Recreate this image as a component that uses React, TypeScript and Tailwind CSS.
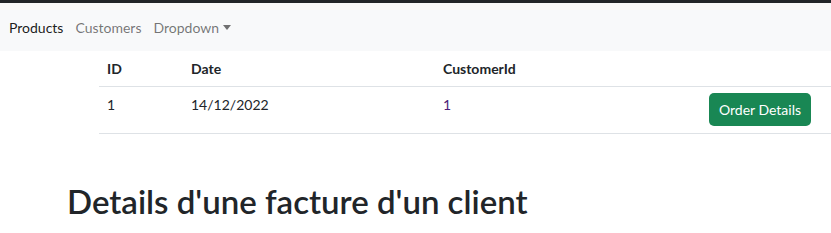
const font = { fontFamily: 'Lato, "Noto Sans", sans-serif' };

function Caret() {
  return (
    <svg width="8" height="5" viewBox="0 0 8 5" className="ml-[4px] mt-[1px]">
      <path d="M0 0h8L4 5z" fill="currentColor" />
    </svg>
  );
}

export default function App() {
  return (
    <div className="min-h-screen bg-white text-[#212529]" style={font}>
      <div className="h-[3px] bg-[#212529]" />
      <nav className="flex h-[48px] items-center bg-[#f8f9fa] px-[9px] text-[14px]">
        <a className="mr-[12px] text-black/90">Products</a>
        <a className="mr-[12px] text-black/55">Customers</a>
        <a className="flex items-center text-black/55">
          Dropdown
          <Caret />
        </a>
      </nav>

      <div className="ml-[99px]">
        <table className="w-[732px] border-collapse text-left text-[14px]">
          <thead>
            <tr className="h-[35px] border-b border-[#dee2e6]">
              <th className="w-[84px] px-[8px] font-bold">ID</th>
              <th className="w-[252px] px-[8px] font-bold">Date</th>
              <th className="w-[266px] px-[8px] font-bold">CustomerId</th>
              <th className="px-[8px]" />
            </tr>
          </thead>
          <tbody>
            <tr className="border-b border-[#dee2e6]">
              <td className="px-[8px] pt-[7px] align-top">1</td>
              <td className="px-[8px] pt-[7px] align-top">14/12/2022</td>
              <td className="px-[8px] pt-[7px] align-top">
                <a className="text-[#4b1d78]">1</a>
              </td>
              <td className="px-[8px] pb-[7px] pt-[6px] align-top">
                <button className="h-[33px] w-[102px] rounded-[5px] bg-[#198754] text-[14px] text-white">
                  Order Details
                </button>
              </td>
            </tr>
          </tbody>
        </table>
      </div>

      <h1 className="ml-[67px] mt-[48px] text-[33px] font-semibold leading-[1.2]">
        Details d'une facture d'un client
      </h1>
    </div>
  );
}
